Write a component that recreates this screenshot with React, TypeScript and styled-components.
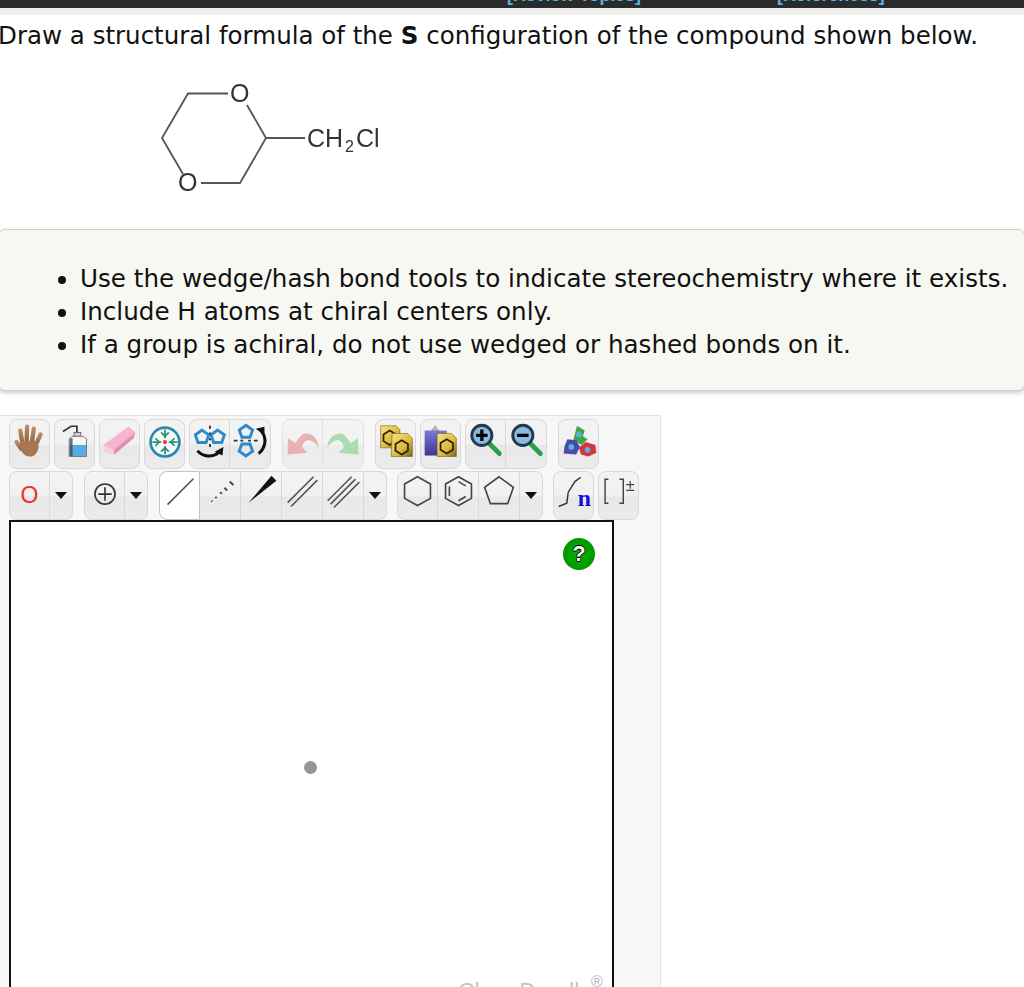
import React from 'react';
import styled, { createGlobalStyle } from 'styled-components';

const GlobalStyle = createGlobalStyle`
  html, body {
    margin: 0;
    padding: 0;
    height: 987px;
    overflow: hidden;
    background: #fff;
    font-family: "DejaVu Sans", Verdana, sans-serif;
  }
`;

const TopBar = styled.div`
  height: 8px;
  background: #2b2b2b;
  overflow: hidden;
  display: flex;
  padding-left: 507px;
  gap: 136px;
`;

const TopLink = styled.span`
  margin-top: -14px;
  font: bold 17.8px/18px "Liberation Sans", sans-serif;
  color: #57b4e6;
  white-space: nowrap;
`;

const Strip = styled.div`
  height: 7px;
  background: #eeeeee;
`;

const Heading = styled.h1`
  margin: 5px 0 0 -2px;
  font-size: 24.52px;
  font-weight: 400;
  line-height: 32px;
  color: #111;
  white-space: nowrap;

  b {
    font-weight: 700;
  }
`;

const Figure = styled.div`
  height: 130px;
  margin: 18px 0 0 140px;

  svg {
    filter: blur(0.35px);
  }
`;

const Card = styled.div`
  box-sizing: border-box;
  width: 1027px;
  height: 162px;
  margin: 29px 0 0 -2px;
  padding: 32px 0 0 0;
  background: #f8f8f3;
  border: 1px solid #cfcfcf;
  border-radius: 7px;
  box-shadow: 0 2px 4px rgba(0, 0, 0, 0.2);
`;

const Bullets = styled.ul`
  margin: 0;
  padding: 0 0 0 81px;
  font-size: 24.6px;
  line-height: 33px;
  color: #111;
  white-space: nowrap;
`;

const Sketcher = styled.div`
  box-sizing: border-box;
  width: 662px;
  height: 640px;
  margin: 24px 0 0 -1px;
  padding: 3px 0 0 9px;
  background: #f7f7f7;
  border: 1px solid #e2e2e2;
`;

const Toolbar = styled.div`
  display: flex;
  height: 50px;
`;

const LowerToolbar = styled(Toolbar)`
  height: 49px;
  margin-top: 2px;
`;

const Group = styled.div<{ $gap?: number; $faded?: boolean }>`
  display: flex;
  margin-left: ${({ $gap }) => $gap ?? 0}px;
  opacity: ${({ $faded }) => ($faded ? 0.75 : 1)};
`;

const Tool = styled.div<{ $narrow?: boolean; $selected?: boolean }>`
  box-sizing: border-box;
  width: ${({ $narrow }) => ($narrow ? 23 : 41)}px;
  height: 100%;
  display: flex;
  align-items: center;
  justify-content: center;
  border: 1.5px solid #d9d9d9;
  border-left-width: 0;
  background: ${({ $selected }) =>
    $selected ? '#fff' : 'linear-gradient(#f3f3f3, #f1f1f1 50%, #e8e8e8 54%, #ececec)'};
  ${({ $selected }) => ($selected ? 'border-color: #c4c4c4;' : '')}

  &:first-child {
    border-left-width: 1.5px;
    border-top-left-radius: 8px;
    border-bottom-left-radius: 8px;
  }
  &:last-child {
    border-top-right-radius: 8px;
    border-bottom-right-radius: 8px;
  }

  svg {
    display: block;
    width: 41px;
    height: 100%;
    flex: none;
    margin: -1.5px;
    filter: blur(0.35px);
  }
`;

const Caret = styled.span`
  width: 0;
  height: 0;
  border-left: 6px solid transparent;
  border-right: 6px solid transparent;
  border-top: 7px solid #111;
`;

const AtomLabel = styled.span`
  font: 400 23px "Liberation Sans", sans-serif;
  color: #f22d2d;
`;

const Canvas = styled.div`
  position: relative;
  box-sizing: border-box;
  width: 605px;
  height: 560px;
  background: #fff;
  border: 2px solid #111;
  border-bottom: 0;
`;

const HelpBadge = styled.div`
  position: absolute;
  top: 16px;
  left: 552px;
  width: 32px;
  height: 32px;
  border-radius: 50%;
  background: radial-gradient(circle at 50% 50%, #00b400, #009a00 65%, #006f00);
  color: #fff;
  font: bold 22px/32px "Liberation Sans", sans-serif;
  text-align: center;
  text-shadow: -1px 0 #000, 1px 0 #000, 0 -1px #000, 0 1px #000;
`;

const CenterDot = styled.div`
  position: absolute;
  top: 239px;
  left: 293px;
  width: 13px;
  height: 13px;
  border-radius: 50%;
  background: #959595;
`;

const Watermark = styled.div`
  position: absolute;
  top: 455px;
  left: 447px;
  font: 400 23px/30px "Liberation Sans", sans-serif;
  color: #c4c4c4;
  white-space: nowrap;
`;

const Registered = styled.span`
  position: absolute;
  top: 450px;
  left: 580px;
  font: 400 16px/20px "Liberation Sans", sans-serif;
  color: #b5b5b5;
`;

const Icon: React.FC<{ children: React.ReactNode; h?: number }> = ({ children, h = 50 }) => (
  <svg viewBox={`0 0 41 ${h}`} aria-hidden="true">
    {children}
  </svg>
);

const Molecule = () => (
  <svg width="260" height="130" viewBox="0 0 260 130" aria-label="molecule">
    <g fill="none" stroke="#555" strokeWidth="1.8">
      <path d="M88 23.500H48L22 68L43 104" />
      <path d="M61 113H100L126 68L107 35" />
      <path d="M126 68H165" />
    </g>
    <g fill="#333" fontFamily="'Liberation Sans', sans-serif" fontSize="25">
      <text x="90" y="32">O</text>
      <text x="38" y="121">O</text>
      <text x="167" y="77">CH</text>
      <text x="205" y="82" fontSize="16">2</text>
      <text x="216" y="77">Cl</text>
    </g>
  </svg>
);

const Hand = () => (
  <Icon>
    <defs>
      <linearGradient id="skin" x1="0" y1="0" x2="0" y2="1">
        <stop offset="0" stopColor="#b98d6b" />
        <stop offset="1" stopColor="#94623c" />
      </linearGradient>
    </defs>
    <g stroke="url(#skin)" strokeWidth="4.500" strokeLinecap="round" fill="none">
      <path d="M13 24L11 11" />
      <path d="M17.500 22L18 7" />
      <path d="M23 23L25 9" />
      <path d="M27 26L32 15" />
      <path d="M12 30L7 23" />
    </g>
    <path d="M11 22h18l1 6c-1 6-4 10-9 10-5 0-8-3-10-8z" fill="#a87650" />
  </Icon>
);

const WashBottle = () => (
  <Icon>
    <path d="M8.500 12L17 6.500h6v7" fill="none" stroke="#333" strokeWidth="1.800" />
    <rect x="20" y="13" width="7" height="4" fill="#cfcfcf" stroke="#555" strokeWidth="0.8" />
    <path d="M18 17h12l3 3v18H15V20z" fill="#f5f7f8" stroke="#555" strokeWidth="0.8" />
    <path d="M15.500 26h17v11.500h-17z" fill="#56ace6" />
    <path d="M15.500 19h3v18.500h-3z" fill="#444" opacity="0.75" />
  </Icon>
);

const Eraser = () => (
  <Icon>
    <path d="M4 26L30 7l7 6-2 6-20 17-10-3z" fill="#f6a6c8" />
    <path d="M4 26l11 5 22-18-7-6z" fill="#f7b4d2" />
    <path d="M4 26l11 5v5l-10-3z" fill="#f9cfe0" />
    <path d="M15 31l22-18-2 6-20 17z" fill="#e58bb4" />
  </Icon>
);

const Clean = () => (
  <Icon>
    <circle cx="21" cy="23" r="15" fill="#f6fbfb" stroke="#2b87b0" strokeWidth="2.800" />
    <g stroke="#2f8f6a" strokeWidth="1.800" fill="none">
      <path d="M21 10v9M21 27v9M8 23h9M25 23h9" />
      <path d="M17 13l4 4 4-4M17 33l4-4 4 4M11 19l4 4-4 4M31 19l-4 4 4 4" />
    </g>
    <circle cx="21" cy="23" r="2.200" fill="#e83a3a" />
  </Icon>
);

const FlipH = () => (
  <Icon>
    <g fill="none" stroke="#2f8ac8" strokeWidth="3">
      <path d="M12.700 10.500l7 5-2.700 8h-8.500l-2.700-8z" />
      <path d="M29 10.500l7 5-2.700 8h-8.500l-2.700-8z" />
    </g>
    <path d="M21 6v3M21 13v2M21 19v2M21 25v3" stroke="#333" strokeWidth="2" />
    <path d="M8 32c6 7 16 7 22 2" fill="none" stroke="#111" strokeWidth="3" />
    <path d="M35 28l-1 9-8-4z" fill="#111" />
  </Icon>
);

const FlipV = () => (
  <Icon>
    <g fill="none" stroke="#2f8ac8" strokeWidth="3">
      <path d="M15.700 5.500l7 5-2.700 7.500h-8.500l-2.700-7.500z" />
      <path d="M11.500 25h8.500l2.700 7.500-7 5-7-5z" />
    </g>
    <path d="M3 21.500h4M10 21.500h3M18 21.500h3M24 21.500h4" stroke="#333" strokeWidth="2" />
    <path d="M29 35c7-6 9-16 3-23" fill="none" stroke="#111" strokeWidth="3.200" />
    <path d="M26 9l9-2 0 9z" fill="#111" />
  </Icon>
);

const Undo = () => (
  <Icon>
    <path
      d="M5 36L5.500 19L13 24C17 18 20 14 24 14C30 14 36 18 37.500 28C33 23 30 21 26 21C23 21 21 25 20 28L25.500 34Z"
      fill="#e39c9a"
    />
  </Icon>
);

const Redo = () => (
  <Icon>
    <path
      d="M36 36L35.500 19L28 24C24 18 21 14 17 14C11 14 5 18 3.500 28C8 23 11 21 15 21C18 21 20 25 21 28L15.500 34Z"
      fill="#8fd49a"
    />
  </Icon>
);

const GoldGradient = () => (
  <defs>
    <linearGradient id="gold" x1="0" y1="0" x2="1" y2="1">
      <stop offset="0" stopColor="#f6e48a" />
      <stop offset="0.6" stopColor="#dcb93a" />
      <stop offset="1" stopColor="#7d6418" />
    </linearGradient>
  </defs>
);

const Templates = () => (
  <Icon>
    <GoldGradient />
    <path d="M5 6h16l4 4v19H5z" fill="url(#gold)" stroke="#6e5a18" strokeWidth="0.6" />
    <path d="M14.500 11l6.500 4v7l-6.500 4-6.500-4v-7z" fill="none" stroke="#2a2208" strokeWidth="1.800" />
    <path d="M17 14h16l5 5v19H16z" fill="url(#gold)" stroke="#6e5a18" strokeWidth="0.6" />
    <path d="M27 21l6.500 4v7l-6.500 4-6.500-4v-7z" fill="none" stroke="#2a2208" strokeWidth="1.800" />
  </Icon>
);

const Paste = () => (
  <Icon>
    <GoldGradient />
    <defs>
      <linearGradient id="board" x1="0" y1="0" x2="0" y2="1">
        <stop offset="0" stopColor="#7c78d8" />
        <stop offset="1" stopColor="#3a3694" />
      </linearGradient>
    </defs>
    <rect x="4" y="11" width="23" height="26" fill="url(#board)" />
    <path d="M11 11l2-2 2-3 2 3 2 2z" fill="#bbb" stroke="#777" strokeWidth="0.6" />
    <path d="M17 14h15l5 5v19H17z" fill="url(#gold)" stroke="#6e5a18" strokeWidth="0.6" />
    <path d="M27 20l6.500 4v7l-6.500 4-6.500-4v-7z" fill="none" stroke="#2a2208" strokeWidth="1.800" />
  </Icon>
);

const Magnifier: React.FC<{ plus?: boolean }> = ({ plus }) => (
  <Icon>
    <path d="M25 25l10 10" stroke="#28a050" strokeWidth="5" strokeLinecap="round" />
    <circle cx="16.700" cy="16" r="10.500" fill="#86bbe2" stroke="#25394d" strokeWidth="3" />
    <path d={plus ? 'M10.700 16h12M16.700 10v12' : 'M10.700 16h12'} stroke="#050505" strokeWidth="3.400" />
  </Icon>
);

const Colors = () => (
  <Icon>
    <path d="M19 6l8 5-2 6 5 3-6 6-9-5z" fill="#3fa646" />
    <path d="M9 20l9 1 4 7-4 8-13-1 1-8z" fill="#4a4aa8" />
    <path d="M28 23l10 3 1 8-8 4-8-2-2-7z" fill="#d9323f" />
    <circle cx="21" cy="15" r="3" fill="#5ab0d8" />
    <circle cx="13" cy="28" r="3" fill="#5ab0d8" />
    <circle cx="30" cy="31" r="3" fill="#5ab0d8" />
  </Icon>
);

const ChargePlus = () => (
  <Icon h={49}>
    <circle cx="21" cy="23" r="10.500" fill="none" stroke="#333" strokeWidth="1.700" />
    <path d="M14 23h14M21 16v14" stroke="#333" strokeWidth="1.700" />
  </Icon>
);

const SingleBond = () => (
  <Icon h={49}>
    <path d="M8 34L35 7" stroke="#555" strokeWidth="1.700" />
  </Icon>
);

const HashBond = () => (
  <Icon h={49}>
    <g stroke="#444" strokeWidth="2">
      <path d="M11 30l1 .8" />
      <path d="M15 26l1.500 1.200" />
      <path d="M20 21l2 1.800" />
      <path d="M24.500 16.500l3 2.700" />
      <path d="M30 10l4 3.500" />
    </g>
  </Icon>
);

const WedgeBond = () => (
  <Icon h={49}>
    <path d="M7 32L31 4l5 5z" fill="#111" />
  </Icon>
);

const DoubleBond = () => (
  <Icon h={49}>
    <path d="M5 32L32 5M8.500 36L36 8.500" stroke="#555" strokeWidth="1.700" />
  </Icon>
);

const TripleBond = () => (
  <Icon h={49}>
    <path d="M4 30L29 5M7 33.500L33 7.500M10.500 37L37 10.500" stroke="#555" strokeWidth="1.700" />
  </Icon>
);

const Hexagon = () => (
  <Icon h={49}>
    <path d="M20.500 5L34 12.500V27.500L20.500 35L7 27.500V12.500Z" fill="none" stroke="#444" strokeWidth="1.700" />
  </Icon>
);

const Benzene = () => (
  <Icon h={49}>
    <path d="M20.500 5L34 12.500V27.500L20.500 35L7 27.500V12.500Z" fill="none" stroke="#444" strokeWidth="1.700" />
    <path d="M20.500 10L28 14.500M11 15v10M20.500 30L28 25.500" stroke="#444" strokeWidth="1.700" />
  </Icon>
);

const Pentagon = () => (
  <Icon h={49}>
    <path d="M20 5L35 16L29 33H11L5 16Z" fill="none" stroke="#444" strokeWidth="1.700" />
  </Icon>
);

const SgroupN = () => (
  <Icon h={49}>
    <path d="M5 36l8.500-3.500L15 21l7-11 6-4.500" fill="none" stroke="#333" strokeWidth="1.500" />
    <text x="25" y="35" fontFamily="'Liberation Serif', serif" fontWeight="700" fontSize="25" fill="#1111dd">n</text>
  </Icon>
);

const Brackets = () => (
  <Icon h={49}>
    <path d="M10 7.500H6.500v25H10M21.500 7.500H25.500v25H21.500" fill="none" stroke="#444" strokeWidth="1.500" />
    <text x="28" y="20" fontFamily="'Liberation Sans', sans-serif" fontSize="17" fill="#444">±</text>
  </Icon>
);

const App: React.FC = () => (
  <>
    <GlobalStyle />
    <TopBar>
      <TopLink>[Review Topics]</TopLink>
      <TopLink>[References]</TopLink>
    </TopBar>
    <Strip />
    <Heading>
      Draw a structural formula of the <b>S</b> configuration of the compound shown below.
    </Heading>
    <Figure>
      <Molecule />
    </Figure>
    <Card>
      <Bullets>
        <li>Use the wedge/hash bond tools to indicate stereochemistry where it exists.</li>
        <li>Include H atoms at chiral centers only.</li>
        <li>If a group is achiral, do not use wedged or hashed bonds on it.</li>
      </Bullets>
    </Card>
    <Sketcher>
      <Toolbar>
        <Group><Tool><Hand /></Tool></Group>
        <Group $gap={4}><Tool><WashBottle /></Tool></Group>
        <Group $gap={4}><Tool><Eraser /></Tool></Group>
        <Group $gap={4}><Tool><Clean /></Tool></Group>
        <Group $gap={4}>
          <Tool><FlipH /></Tool>
          <Tool><FlipV /></Tool>
        </Group>
        <Group $gap={11} $faded>
          <Tool><Undo /></Tool>
          <Tool><Redo /></Tool>
        </Group>
        <Group $gap={11}><Tool><Templates /></Tool></Group>
        <Group $gap={4}><Tool><Paste /></Tool></Group>
        <Group $gap={4}>
          <Tool><Magnifier plus /></Tool>
          <Tool><Magnifier /></Tool>
        </Group>
        <Group $gap={11}><Tool><Colors /></Tool></Group>
      </Toolbar>
      <LowerToolbar>
        <Group>
          <Tool><AtomLabel>O</AtomLabel></Tool>
          <Tool $narrow><Caret /></Tool>
        </Group>
        <Group $gap={11}>
          <Tool><ChargePlus /></Tool>
          <Tool $narrow><Caret /></Tool>
        </Group>
        <Group $gap={11}>
          <Tool $selected><SingleBond /></Tool>
          <Tool><HashBond /></Tool>
          <Tool><WedgeBond /></Tool>
          <Tool><DoubleBond /></Tool>
          <Tool><TripleBond /></Tool>
          <Tool $narrow><Caret /></Tool>
        </Group>
        <Group $gap={10}>
          <Tool><Hexagon /></Tool>
          <Tool><Benzene /></Tool>
          <Tool><Pentagon /></Tool>
          <Tool $narrow><Caret /></Tool>
        </Group>
        <Group $gap={10}><Tool><SgroupN /></Tool></Group>
        <Group $gap={4}><Tool><Brackets /></Tool></Group>
      </LowerToolbar>
      <Canvas>
        <HelpBadge>?</HelpBadge>
        <CenterDot />
        <Watermark>ChemDoodle</Watermark>
        <Registered>®</Registered>
      </Canvas>
    </Sketcher>
  </>
);

export default App;
